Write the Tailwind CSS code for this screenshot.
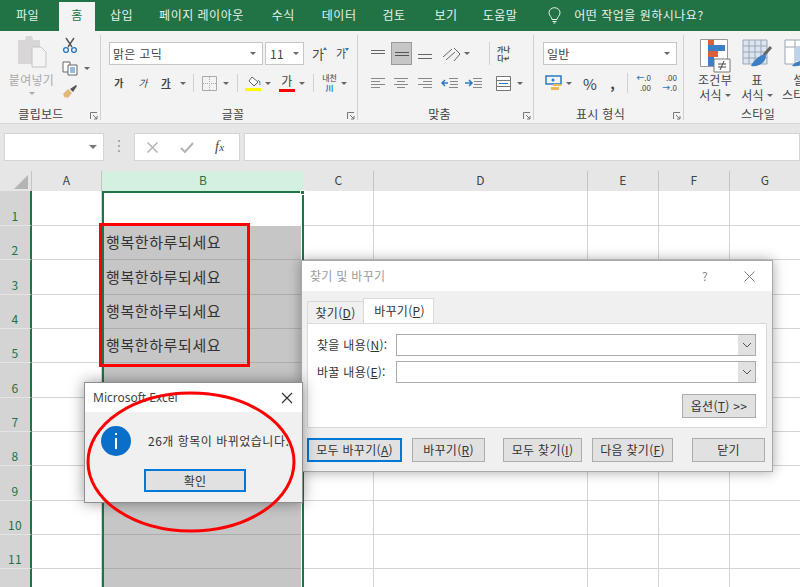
<!DOCTYPE html>
<html lang="ko">
<head>
    <meta charset="UTF-8">
    <title>Excel 찾기 및 바꾸기</title>
    <script src="https://cdn.jsdelivr.net/npm/@tailwindcss/browser@4"></script>
</head>
<body class="relative h-[587px] w-[800px] overflow-hidden bg-white font-['Noto_Sans_CJK_KR',sans-serif] text-[#333] leading-none tracking-[0.3px]">

    <!-- tabs -->
    <nav class="flex h-[31px] items-end bg-[#217346] text-[12px] tracking-[0.5px] text-[#e8f2ec]">
        <span class="flex h-[29px] w-[55px] items-center justify-center pb-[3px]">파일</span>
        <span class="ml-[4px] flex h-[29px] w-[36px] items-center justify-center bg-[#f3f3f3] pb-[3px] text-[#217346]">홈</span>
        <span class="flex h-[29px] items-center pb-[3px] pl-[15px]">삽입</span>
        <span class="flex h-[29px] items-center pb-[3px] pl-[26px]">페이지 레이아웃</span>
        <span class="flex h-[29px] items-center pb-[3px] pl-[28px]">수식</span>
        <span class="flex h-[29px] items-center pb-[3px] pl-[27px]">데이터</span>
        <span class="flex h-[29px] items-center pb-[3px] pl-[26px]">검토</span>
        <span class="flex h-[29px] items-center pb-[3px] pl-[29px]">보기</span>
        <span class="flex h-[29px] items-center pb-[3px] pl-[25px]">도움말</span>
        <span class="flex h-[29px] items-center pb-[3px] pl-[31px]">
            <svg width="13" height="17" viewBox="0 0 13 17" fill="none" stroke="#e8f2ec" stroke-width="1"><path d="M4 12.5C4 10 1 9 1 5.7a5.5 5 0 0 1 11 0C12 9 9 10 9 12.5ZM4.5 14.5h4M5.5 16h2"/></svg>
        </span>
        <span class="flex h-[29px] items-center pb-[3px] pl-[13px]">어떤 작업을 원하시나요?</span>
    </nav>

    <!-- ribbon -->
    <div class="flex h-[93px] border-b border-[#d6d6d6] bg-[#f3f3f3] pt-[4px] text-[#444]">

        <section class="relative flex h-[85px] w-[101px] flex-col border-r border-[#d0d0d0]">
            <div class="flex">
                <div class="flex w-[60px] flex-col items-center pl-[3px]">
                    <svg width="30" height="33" viewBox="0 0 30 33">
                        <path d="M1 5h7l1-4h6l1 4h7v24H1Z" fill="#d8d6d6"/>
                        <path d="M15 12h9l5 5v15H15Z" fill="#f4f4f4" stroke="#c4c4c4"/>
                    </svg>
                    <span class="mt-[6px] whitespace-nowrap text-[12px] text-[#a9a9a9]">붙여넣기</span>
                    <span class="mt-[6px] border-x-[3px] border-t-[3px] border-x-transparent border-t-[#aaa]"></span>
                </div>
                <div class="flex flex-col gap-[8px] pl-[2px] pt-[2px]">
                    <svg width="16" height="16" viewBox="0 0 16 16" fill="none" stroke-width="1.4"><path d="M4 1l6 9M12 1l-6 9" stroke="#555"/><circle cx="4" cy="13" r="2.4" stroke="#2b79c2"/><circle cx="12" cy="13" r="2.4" stroke="#2b79c2"/></svg>
                    <div class="flex items-center gap-[6px]">
                        <svg width="16" height="15" viewBox="0 0 16 15" fill="#fff" stroke="#666"><path d="M1 1h7v10H1Z"/><path d="M6 4h9v10H6Z"/><path d="M8 7h5M8 9h5M8 11h5" stroke="#2b79c2"/></svg>
                        <span class="border-x-[3px] border-t-[3px] border-x-transparent border-t-[#666]"></span>
                    </div>
                    <svg width="16" height="15" viewBox="0 0 16 15"><path d="M1 10l5-5 4 4-4 5-2-1-1 1Z" fill="#e2b878"/><path d="M8 5l6-4 1 1-4 6Z" fill="#555"/></svg>
                </div>
            </div>
            <span class="mt-auto h-[12px] pr-[18px] text-center text-[12px]">클립보드</span>
            <svg class="absolute bottom-0 right-[2px]" width="8" height="8" viewBox="0 0 8 8" fill="none" stroke="#777"><path d="M.5 7V.5H7M3 3l4 4M7 4v3H4"/></svg>
        </section>

        <section class="relative flex h-[85px] w-[257px] flex-col border-r border-[#d0d0d0] pl-[8px]">
            <div class="mt-[7px] flex h-[23px] items-center text-[12px]">
                <div class="flex h-[23px] w-[154px] items-center justify-between border border-[#c6c6c6] bg-white px-[3px]">맑은 고딕<span class="mr-[3px] border-x-[3px] border-t-[3px] border-x-transparent border-t-[#666]"></span></div>
                <div class="ml-[2px] flex h-[23px] w-[39px] items-center justify-between border border-[#c6c6c6] bg-white px-[4px]">11<span class="border-x-[3px] border-t-[3px] border-x-transparent border-t-[#666]"></span></div>
                <span class="ml-[8px] flex w-[14px] items-start text-[13px]">가<span class="ml-[-1px] border-x-[2px] border-b-[3px] border-x-transparent border-b-[#2b79c2]"></span></span>
                <span class="ml-[10px] flex w-[14px] items-start text-[11px]">가<span class="ml-[-1px] border-x-[2px] border-t-[3px] border-x-transparent border-t-[#2b79c2]"></span></span>
            </div>
            <div class="mt-[7px] flex h-[22px] items-center text-[10px]">
                <span class="w-[20px] text-center font-bold">가</span>
                <span class="ml-[4px] w-[20px] text-center italic">가</span>
                <span class="ml-[3px] w-[20px] text-center font-bold underline">가</span>
                <span class="ml-[4px] border-x-[3px] border-t-[3px] border-x-transparent border-t-[#666]"></span>
                <span class="ml-[7px] h-[18px] w-px bg-[#d0d0d0]"></span>
                <svg class="ml-[8px]" width="15" height="15" viewBox="0 0 15 15" fill="none" stroke="#aaa"><path d="M.5.5h14v14H.5Z"/><path d="M7.5 1v13M1 7.5h13" stroke-dasharray="1 1"/></svg>
                <span class="ml-[6px] border-x-[3px] border-t-[3px] border-x-transparent border-t-[#666]"></span>
                <span class="ml-[8px] h-[18px] w-px bg-[#d0d0d0]"></span>
                <div class="ml-[7px] flex w-[16px] flex-col items-center">
                    <svg width="15" height="11" viewBox="0 0 15 11" fill="#fff" stroke="#666"><path d="M6 1l6 5-4 4-5-5Z"/><path d="M12 4c2 1 2 3 2 5" stroke="#2b79c2"/></svg>
                    <span class="mt-px h-[3px] w-[16px] bg-[#ffff00]"></span>
                </div>
                <span class="ml-[4px] border-x-[3px] border-t-[3px] border-x-transparent border-t-[#666]"></span>
                <div class="ml-[8px] flex w-[16px] flex-col items-center text-[12px]">가<span class="mt-[2px] h-[3px] w-[16px] bg-[#ff0000]"></span></div>
                <span class="ml-[4px] border-x-[3px] border-t-[3px] border-x-transparent border-t-[#666]"></span>
                <span class="ml-[8px] h-[18px] w-px bg-[#d0d0d0]"></span>
                <div class="ml-[7px] flex w-[17px] flex-col items-center gap-[2px] text-[8px] tracking-normal">내천<span class="font-bold text-[#2b79c2]">川</span></div>
                <span class="ml-[3px] border-x-[3px] border-t-[3px] border-x-transparent border-t-[#666]"></span>
            </div>
            <span class="mt-auto h-[12px] text-center text-[12px]">글꼴</span>
            <svg class="absolute bottom-0 right-[2px]" width="8" height="8" viewBox="0 0 8 8" fill="none" stroke="#777"><path d="M.5 7V.5H7M3 3l4 4M7 4v3H4"/></svg>
        </section>

        <section class="relative flex h-[85px] w-[176px] flex-col border-r border-[#d0d0d0] pl-[13px]">
            <div class="mt-[7px] flex h-[23px] items-center">
                <svg width="14" height="14" viewBox="0 0 14 14" stroke="#666"><path d="M0 3.5h14M0 6.500h14"/></svg>
                <div class="ml-[6px] flex h-[23px] w-[21px] items-center justify-center border border-[#9a9a9a] bg-[#c6c6c6]">
                    <svg width="14" height="6" viewBox="0 0 14 6" stroke="#555"><path d="M0 1.500h14M0 4.500h14"/></svg>
                </div>
                <svg class="ml-[6px] mt-[6px]" width="14" height="10" viewBox="0 0 14 10" stroke="#666"><path d="M0 2.500h14M0 6.500h14"/></svg>
                <svg class="ml-[10px]" width="20" height="16" viewBox="0 0 20 16" fill="none" stroke="#666"><path d="M1 11l9-8M4 14l9-8M12 2l6 6-6 7"/></svg>
                <span class="ml-[2px] border-x-[3px] border-t-[3px] border-x-transparent border-t-[#666]"></span>
                <span class="ml-[19px] h-[23px] w-px bg-[#d0d0d0]"></span>
                <div class="ml-[7px] flex flex-col items-center gap-[2px] text-[7px] font-bold tracking-normal">가나<span>다↵</span></div>
            </div>
            <div class="mt-[7px] flex h-[22px] items-center">
                <svg width="14" height="12" viewBox="0 0 14 12" stroke="#888"><path d="M0 1.500h14M0 4.500h9M0 7.500h14M0 10.500h9"/></svg>
                <svg class="ml-[9px]" width="14" height="12" viewBox="0 0 14 12" stroke="#888"><path d="M0 1.500h14M3 4.500h8M0 7.500h14M3 10.500h8"/></svg>
                <svg class="ml-[10px]" width="14" height="12" viewBox="0 0 14 12" stroke="#888"><path d="M0 1.500h14M5 4.500h9M0 7.500h14M5 10.500h9"/></svg>
                <svg class="ml-[9px]" width="17" height="12" viewBox="0 0 17 12" fill="none"><path d="M8 1.500h9M9 4.500h8M9 7.500h8M8 10.500h9" stroke="#888"/><path d="M7 6H1M4 3L1 6l3 3" stroke="#2b79c2" stroke-width="1.500"/></svg>
                <svg class="ml-[7px]" width="17" height="12" viewBox="0 0 17 12" fill="none"><path d="M8 1.500h9M9 4.500h8M9 7.500h8M8 10.500h9" stroke="#888"/><path d="M0 6h6M4 3l3 3-3 3" stroke="#2b79c2" stroke-width="1.500"/></svg>
                <svg class="ml-[14px]" width="15" height="15" viewBox="0 0 15 15" fill="#fff" stroke="#777"><path d="M.5.500h14v14H.5ZM1 4.500h13M1 10.500h13"/><path d="M3 7.500h9" stroke="#2b79c2"/></svg>
                <span class="ml-[6px] border-x-[3px] border-t-[3px] border-x-transparent border-t-[#666]"></span>
            </div>
            <span class="mt-auto h-[12px] pr-[25px] text-center text-[12px]">맞춤</span>
            <svg class="absolute bottom-0 right-[2px]" width="8" height="8" viewBox="0 0 8 8" fill="none" stroke="#777"><path d="M.5 7V.5H7M3 3l4 4M7 4v3H4"/></svg>
        </section>

        <section class="relative flex h-[85px] w-[150px] flex-col border-r border-[#d0d0d0] pl-[9px]">
            <div class="mt-[7px] flex h-[23px] w-[134px] items-center justify-between border border-[#c6c6c6] bg-white px-[3px] text-[12px]">일반<span class="mr-[3px] border-x-[3px] border-t-[3px] border-x-transparent border-t-[#666]"></span></div>
            <div class="mt-[7px] flex h-[22px] items-center">
                <svg class="ml-[2px]" width="17" height="16" viewBox="0 0 17 16" fill="none"><path d="M1 1h15v8H1Z" stroke="#2b79c2" stroke-width="1.500"/><circle cx="8" cy="5" r="1.500" fill="#2b79c2"/><path d="M8 9h8v2H8ZM6 12h8v3H6Z" fill="#eeb657"/></svg>
                <span class="ml-[4px] border-x-[3px] border-t-[3px] border-x-transparent border-t-[#666]"></span>
                <span class="ml-[11px] text-[15px]">%</span>
                <span class="ml-[13px] text-[14px] font-bold">,</span>
                <span class="ml-[12px] h-[20px] w-px bg-[#d0d0d0]"></span>
                <span class="ml-[7px] flex w-[16px] flex-col items-end gap-[2px] text-[8px] tracking-normal"><span><b class="text-[#2b79c2]">←</b>.0</span><span>.00</span></span>
                <span class="ml-[8px] flex w-[18px] flex-col items-end gap-[2px] text-[8px] tracking-normal"><span>.00</span><span><b class="text-[#2b79c2]">→</b>.0</span></span>
            </div>
            <span class="mt-auto h-[12px] pr-[25px] text-center text-[12px]">표시 형식</span>
            <svg class="absolute bottom-0 right-[2px]" width="8" height="8" viewBox="0 0 8 8" fill="none" stroke="#777"><path d="M.5 7V.5H7M3 3l4 4M7 4v3H4"/></svg>
        </section>

        <section class="relative flex h-[85px] w-[116px] flex-col overflow-hidden">
            <div class="flex pl-[9px] pt-[4px] text-[12px]">
                <div class="flex w-[44px] shrink-0 flex-col items-center">
                    <svg width="31" height="34" viewBox="0 0 31 34">
                        <path d="M.5.500h27v27H.5Z" fill="#fff" stroke="#999"/>
                        <path d="M8 1h6v5H8Z" fill="#d8623b"/><path d="M8 6h17v6H8Z" fill="#3c7fc4"/><path d="M8 12h10v6H8Z" fill="#d8623b"/><path d="M8 18h6v9H8Z" fill="#3c7fc4"/>
                        <path d="M14 20h16v13H14Z" fill="#fff" stroke="#777"/><path d="M18 25h8M18 28h8M24 22l-4 9" stroke="#444" fill="none"/>
                    </svg>
                    <span class="mt-[1px] whitespace-nowrap">조건부</span>
                    <span class="mt-[3px] flex items-center gap-[3px] whitespace-nowrap">서식<span class="border-x-[3px] border-t-[3px] border-x-transparent border-t-[#666]"></span></span>
                </div>
                <div class="ml-[-2px] flex w-[44px] shrink-0 flex-col items-center">
                    <svg width="31" height="34" viewBox="0 0 31 34" fill="none">
                        <path d="M1 1h24v24H1ZM1 7h24M1 13h24M1 19h24M7 1v24M13 1v24M19 1v24" stroke="#9aa5b0" fill="#dbe5f1"/>
                        <path d="M29 8l-7 8" stroke="#666" stroke-width="3"/><path d="M22 15c-4 2-10 5-13 12 6 1 14-2 15-10Z" fill="#3c7fc4"/>
                    </svg>
                    <span class="mt-[1px]">표</span>
                    <span class="mt-[3px] flex items-center gap-[3px] whitespace-nowrap">서식<span class="border-x-[3px] border-t-[3px] border-x-transparent border-t-[#666]"></span></span>
                </div>
                <div class="ml-[-2px] flex w-[44px] shrink-0 flex-col items-center">
                    <svg width="31" height="34" viewBox="0 0 31 34" fill="none">
                        <path d="M1 1h26v24H1ZM1 8h26M11 1v24" stroke="#9aa5b0" fill="#fff"/><path d="M11 8h16v14H11Z" fill="#bdd3ea"/><path d="M8 27c3-4 9-6 14-5-3 4-8 6-14 5Z" fill="#3c7fc4"/>
                    </svg>
                    <span class="mt-[1px]">셀</span>
                    <span class="mt-[3px] whitespace-nowrap">스타일</span>
                </div>
            </div>
            <span class="mt-auto h-[12px] pl-[32px] text-center text-[12px]">스타일</span>
        </section>
    </div>

    <!-- formula bar -->
    <div class="flex h-[47px] items-start bg-[#e6e6e6] pl-[4px] pt-[9px]">
        <div class="flex h-[28px] w-[100px] items-center justify-end border border-[#d4d4d4] bg-white pr-[6px]"><span class="border-x-[4px] border-t-[4px] border-x-transparent border-t-[#777]"></span></div>
        <div class="ml-[14px] mt-[7px] flex flex-col gap-[3px]"><span class="size-[2px] bg-[#aaa]"></span><span class="size-[2px] bg-[#aaa]"></span><span class="size-[2px] bg-[#aaa]"></span></div>
        <div class="ml-[14px] flex h-[28px] w-[106px] items-center border border-[#d4d4d4] bg-white">
            <svg class="ml-[12px]" width="11" height="11" viewBox="0 0 11 11" stroke="#b4b4b4" stroke-width="1.500"><path d="M.5.500l10 10M10.500.500l-10 10"/></svg>
            <svg class="ml-[22px]" width="14" height="11" viewBox="0 0 14 11" fill="none" stroke="#b4b4b4" stroke-width="2"><path d="M1 6l4 4 8-9"/></svg>
            <span class="ml-[21px] font-['Liberation_Serif',serif] text-[14px] italic text-[#444]">f<span class="text-[11px]">x</span></span>
        </div>
        <div class="ml-[4px] h-[28px] flex-1 border border-[#d4d4d4] bg-white"></div>
    </div>

    <!-- column headers -->
    <div class="grid h-[20px] grid-cols-[32px_70px_202px_70px_214px_71px_71px_70px] bg-[#e6e6e6] text-[12px] text-[#444]">
        <div class="relative border-r border-[#c4c4c4]"><span class="absolute bottom-[2px] right-[3px] border-b-[14px] border-l-[14px] border-b-[#b4b4b4] border-l-transparent"></span></div>
        <div class="flex items-center justify-center border-r border-[#c4c4c4] pb-[2px]">A</div>
        <div class="flex items-center justify-center bg-[#d3f0e0] pb-[2px] text-[#217346]">B</div>
        <div class="flex items-center justify-center border-r border-[#c4c4c4] pb-[2px]">C</div>
        <div class="flex items-center justify-center border-r border-[#c4c4c4] pb-[2px]">D</div>
        <div class="flex items-center justify-center border-r border-[#c4c4c4] pb-[2px]">E</div>
        <div class="flex items-center justify-center border-r border-[#c4c4c4] pb-[2px]">F</div>
        <div class="flex items-center justify-center pb-[2px]">G</div>
    </div>

    <!-- sheet -->
    <div id="sheet" class="grid auto-rows-[34.35px] grid-cols-[32px_70px_202px_70px_214px_71px_71px_70px] grid-rows-[35px]"></div>

    <!-- red rectangle -->
    <div class="pointer-events-none absolute left-[99px] top-[223px] h-[144px] w-[151px] border-[3px] border-[#ff0000]"></div>

    <!-- find and replace dialog -->
    <div class="absolute left-[301px] top-[260px] h-[212px] w-[472px] border border-[#a8a8a8] bg-[#f0f0f0] text-[12px] text-[#333] shadow-[0_0_12px_rgba(0,0,0,0.35)]">
        <div class="flex h-[30px] items-center justify-between bg-white pl-[8px] pr-[17px] text-[#9a9a9a]">
            <span>찾기 및 바꾸기</span>
            <div class="flex items-center gap-[36px]">
                <span class="text-[#888]">?</span>
                <svg width="11" height="11" viewBox="0 0 11 11" stroke="#777"><path d="M.5.500l10 10M10.500.500l-10 10"/></svg>
            </div>
        </div>
        <div class="relative z-10 ml-[5px] mt-[8px] flex h-[24px] items-end">
            <span class="flex h-[22px] w-[56px] items-center justify-center border-t border-l border-[#d9d9d9]">찾기(<u>D</u>)</span>
            <span class="flex h-[25px] w-[71px] items-center justify-center border-x border-t border-[#d9d9d9] bg-white pl-[2px]">바꾸기(<u>P</u>)</span>
        </div>
        <div class="mx-[5px] flex h-[105px] flex-col border border-[#d9d9d9] bg-white pl-[9px] pr-[10px]">
            <div class="mt-[10px] flex h-[22px] items-center">
                <span class="w-[79px] whitespace-nowrap">찾을 내용(<u>N</u>):</span>
                <div class="flex h-[22px] flex-1 justify-end border border-[#ababab]"><span class="flex w-[17px] items-center justify-center bg-[#e1e1e1]"><svg width="10" height="6" viewBox="0 0 10 6" fill="none" stroke="#555"><path d="M1 1l4 4 4-4"/></svg></span></div>
            </div>
            <div class="mt-[5px] flex h-[22px] items-center">
                <span class="w-[79px] whitespace-nowrap">바꿀 내용(<u>E</u>):</span>
                <div class="flex h-[22px] flex-1 justify-end border border-[#ababab]"><span class="flex w-[17px] items-center justify-center bg-[#e1e1e1]"><svg width="10" height="6" viewBox="0 0 10 6" fill="none" stroke="#555"><path d="M1 1l4 4 4-4"/></svg></span></div>
            </div>
            <div class="mt-[11px] flex justify-end">
                <span class="flex h-[24px] w-[74px] items-center justify-center border border-[#adadad] bg-[#e1e1e1]">옵션(<u>T</u>) &gt;&gt;</span>
            </div>
        </div>
        <div class="ml-[5px] mt-[10px] flex h-[24px]">
            <span class="flex w-[95px] items-center justify-center border-2 border-[#0078d7] bg-[#e1e1e1]">모두 바꾸기(<u>A</u>)</span>
            <span class="ml-[10px] flex w-[73px] items-center justify-center border border-[#adadad] bg-[#e1e1e1]">바꾸기(<u>R</u>)</span>
            <span class="ml-[18px] flex w-[79px] items-center justify-center border border-[#adadad] bg-[#e1e1e1]">모두 찾기(<u>I</u>)</span>
            <span class="ml-[10px] flex w-[81px] items-center justify-center border border-[#adadad] bg-[#e1e1e1]">다음 찾기(<u>F</u>)</span>
            <span class="ml-[19px] flex w-[73px] items-center justify-center border border-[#adadad] bg-[#e1e1e1]">닫기</span>
        </div>
    </div>

    <!-- message box -->
    <div class="absolute left-[84px] top-[382px] h-[121px] w-[219px] border border-[#8e8e8e] bg-[#f0f0f0] text-[12px] text-[#333] shadow-[0_0_14px_rgba(0,0,0,0.4)]">
        <div class="flex h-[29px] items-center justify-between bg-white pl-[8px] pr-[9px]">
            <span class="whitespace-nowrap font-['Noto_Sans','Noto_Sans_CJK_KR',sans-serif] text-[12px] tracking-normal text-[#444]">Microsoft Excel</span>
            <svg width="12" height="12" viewBox="0 0 12 12" stroke="#333" stroke-width="1.200"><path d="M1 1l10 10M11 1L1 11"/></svg>
        </div>
        <div class="flex h-[57px] items-center pl-[16px]">
            <svg width="30" height="30" viewBox="0 0 30 30"><circle cx="15" cy="15" r="15" fill="#0a6fc9"/><path d="M14 12h2v11h-2ZM14 7h2v2h-2Z" fill="#fff"/></svg>
            <span class="ml-[17px] whitespace-nowrap tracking-[0.5px]">26개 항목이 바뀌었습니다.</span>
        </div>
        <div class="flex justify-center pl-[3px]">
            <span class="flex h-[23px] w-[102px] items-center justify-center border-2 border-[#0078d7] bg-[#e1e1e1]">확인</span>
        </div>
    </div>

    <!-- red ellipse -->
    <svg class="pointer-events-none absolute left-[80px] top-[385px]" width="225" height="155" viewBox="0 0 225 155" fill="none">
        <ellipse cx="111" cy="77" rx="103" ry="69" stroke="#ff0000" stroke-width="3"/>
    </svg>

    <script>
        // build the twelve visible rows
        const sheet = document.getElementById("sheet");
        const cell = "border-r border-b border-[#d4d4d4] bg-white";
        let html = "";
        for (let row = 1; row <= 12; row++) {
            const filled = row > 1;
            const text = row >= 2 && row <= 5 ? "행복한하루되세요" : "";
            html += `<div class="flex items-end justify-center border-r-2 border-b border-r-[#217346] border-b-[#e4e4e4] bg-[#d4d4d4] pb-[3px] text-[12px] text-[#217346]">${row}</div>`;
            html += `<div class="${cell}"></div>`;
            html += `<div class="border-x-2 border-[#217346] bg-white ${row === 1 ? "border-t-2" : ""}"><div class="flex h-full items-center pb-[2px] pl-[2px] text-[15px] tracking-[0.6px] text-[#333] ${filled ? "mr-px border-b border-[#adadad] bg-[#c6c6c6]" : ""}">${text}</div></div>`;
            html += `<div class="${cell}"></div><div class="${cell}"></div><div class="${cell}"></div><div class="${cell}"></div><div class="border-b border-[#d4d4d4] bg-white"></div>`;
        }
        sheet.innerHTML = html;
    </script>
    <!-- fill handle -->
    <span class="absolute left-[300px] top-[190px] size-[5px] border border-white bg-[#217346]"></span>
</body>
</html>
